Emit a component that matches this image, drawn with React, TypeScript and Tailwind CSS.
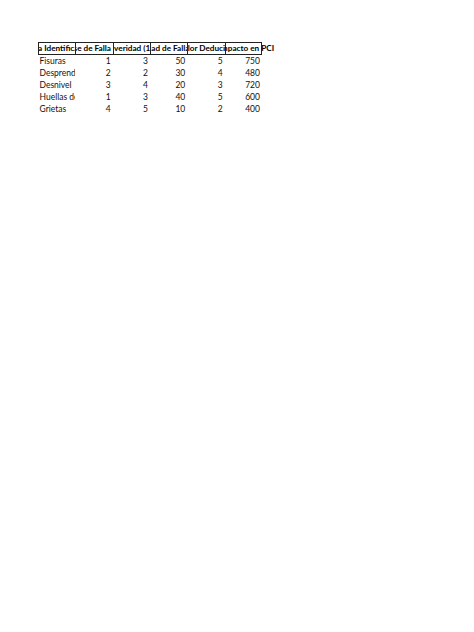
const headers = [
  { label: "Área Identificada", nudge: "-translate-x-[calc(50%+1px)]" },
  { label: "Clase de Falla", nudge: "-translate-x-[calc(50%+8px)]" },
  { label: "Severidad (1-5)", nudge: "-translate-x-[calc(50%-1px)]" },
  { label: "Cantidad de Fallas", nudge: "-translate-x-[calc(50%+9px)]" },
  { label: "Valor Deducido", nudge: "-translate-x-[calc(50%+0px)]" },
  { label: "Impacto en PCI", nudge: "-translate-x-[calc(50%-3px)]" },
];

const rows: [string, number, number, number, number, number][] = [
  ["Fisuras", 1, 3, 50, 5, 750],
  ["Desprendimiento", 2, 2, 30, 4, 480],
  ["Desnivel", 3, 4, 20, 3, 720],
  ["Huellas de desgaste", 1, 3, 40, 5, 600],
  ["Grietas", 4, 5, 10, 2, 400],
];

export default function App() {
  return (
    <div
      className="w-[474px] h-[632px] bg-white pt-[42px] pl-[38px] text-black"
      style={{ fontFamily: 'Lato, "Liberation Sans", Arial, sans-serif' }}
    >
      <div className="flex">
        {headers.map((h, i) => (
          <div
            key={h.label}
            className={
              "relative h-[13px] w-[37.33px] border-y border-l border-[#222] " +
              (i === headers.length - 1
                ? "border-r [clip-path:inset(-2px_-30px_-2px_0)]"
                : "overflow-hidden")
            }
          >
            <div
              className={
                "absolute left-1/2 top-0 whitespace-nowrap text-[8.2px] font-bold leading-[11px] " +
                h.nudge
              }
            >
              {h.label}
            </div>
          </div>
        ))}
      </div>
      {rows.map((r) => (
        <div key={r[0]} className="flex h-[12px] text-[8.5px] leading-[12px] text-[#111]">
          <div className="w-[37.33px] overflow-hidden whitespace-nowrap pl-[1.5px]">
            {r[0]}
          </div>
          {r.slice(1).map((v, j) => (
            <div key={j} className="w-[37.33px] pr-[2px] text-right">
              {v}
            </div>
          ))}
        </div>
      ))}
    </div>
  );
}
